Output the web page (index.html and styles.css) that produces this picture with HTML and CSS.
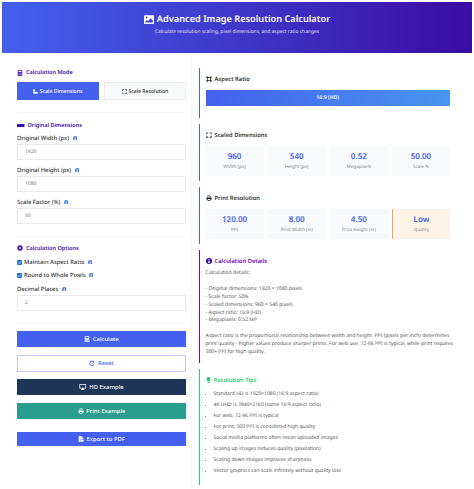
FILE: index.html
```html
<!DOCTYPE html>
<html lang="en">
<head>
<meta charset="utf-8">
<title>Advanced Image Resolution Calculator</title>
<link rel="stylesheet" href="styles.css">
</head>
<body>
<svg class="defs" width="0" height="0" aria-hidden="true">
  <symbol id="i-info" viewBox="0 0 16 16"><path fill-rule="evenodd" d="M8 0a8 8 0 1 1 0 16A8 8 0 0 1 8 0zM6.6 3.5h2.8v2.4H6.6zM6 7h3.4v4.5h1V13H5.6v-1.5h1V8.5H6z"/></symbol>
  <symbol id="i-expand" viewBox="0 0 16 16"><path d="M1 1h5v2.2H3.2V6H1zM10 1h5v5h-2.200V3.200H10zM1 10h2.200v2.800H6V15H1zM12.800 10H15v5h-5v-2.200h2.800z"/></symbol>
  <symbol id="i-print" viewBox="0 0 16 16"><path d="M4 1h6.500L12 2.500V6h-1.500V3H5.500v3H4zM2.500 6.500h11A1.500 1.500 0 0 1 15 8v4h-3v3H4v-3H1V8a1.500 1.500 0 0 1 1.500-1.500zM5.500 10.500v3h5v-3z"/></symbol>
  <symbol id="i-calc" viewBox="0 0 16 16"><path fill-rule="evenodd" d="M3.500 0h9A1.500 1.500 0 0 1 14 1.500v13a1.500 1.500 0 0 1-1.500 1.500h-9A1.500 1.500 0 0 1 2 14.500v-13A1.500 1.500 0 0 1 3.500 0zM4 2v3h8V2zM4 7v1.500h2V7zM7 7v1.500h2V7zM10 7v1.500h2V7zM4 10v1.500h2V10zM7 10v1.500h2V10zM10 10v4h2v-4zM4 12.500V14h5v-1.500z"/></symbol>
</svg>

<header class="hero">
  <h1 class="hero-title">
    <svg class="hero-icon" viewBox="0 0 16 14"><path fill-rule="evenodd" d="M1.500 0h13A1.500 1.500 0 0 1 16 1.500v11a1.500 1.500 0 0 1-1.500 1.500h-13A1.500 1.500 0 0 1 0 12.500v-11A1.500 1.500 0 0 1 1.500 0zM4 2.200a1.600 1.600 0 1 0 0 3.200 1.600 1.600 0 0 0 0-3.200zM2 11.800h12V8L10.800 4.800 6.500 9.200 5 7.700 2 10.500z"/></svg>
    Advanced Image Resolution Calculator
  </h1>
  <p class="hero-sub">Calculate resolution scaling, pixel dimensions, and aspect ratio changes</p>
</header>

<main class="layout">
  <section class="inputs">
    <h2 class="sec-title"><svg class="ic"><use href="#i-calc"/></svg>Calculation Mode</h2>
    <div class="mode-row">
      <button class="mode active"><svg class="ic-s" viewBox="0 0 16 16"><path d="M1 1h5.500v8.500H15V15H2.500A1.500 1.500 0 0 1 1 13.500z"/></svg>Scale Dimensions</button>
      <button class="mode"><svg class="ic-s"><use href="#i-expand"/></svg>Scale Resolution</button>
    </div>

    <h2 class="sec-title rule"><svg class="ic wide" viewBox="0 0 20 8"><path d="M1 0h18a1 1 0 0 1 1 1v6a1 1 0 0 1-1 1H1a1 1 0 0 1-1-1V1a1 1 0 0 1 1-1z"/></svg>Original Dimensions</h2>
    <label class="lbl">Original Width (px)<svg class="info"><use href="#i-info"/></svg></label>
    <div class="field">1920</div>
    <label class="lbl">Original Height (px)<svg class="info"><use href="#i-info"/></svg></label>
    <div class="field">1080</div>
    <label class="lbl">Scale Factor (%)<svg class="info"><use href="#i-info"/></svg></label>
    <div class="field">50</div>

    <h2 class="sec-title rule opts"><svg class="ic" viewBox="0 0 16 16"><path fill-rule="evenodd" d="M8 0l1.600 1.500 2.200-.3.900 2 2 .9-.3 2.200L16 8l-1.600 1.700.3 2.200-2 .9-.9 2-2.200-.3L8 16l-1.600-1.500-2.200.3-.9-2-2-.9.3-2.200L0 8l1.600-1.700-.3-2.200 2-.9.9-2 2.200.3zM8 5.500a2.500 2.500 0 1 0 0 5 2.500 2.500 0 0 0 0-5z"/></svg>Calculation Options</h2>
    <div class="check"><span class="box"><svg viewBox="0 0 10 10"><path d="M2 5l2.200 2.200L8 3" fill="none" stroke="#fff" stroke-width="1.600"/></svg></span>Maintain Aspect Ratio<svg class="info"><use href="#i-info"/></svg></div>
    <div class="check"><span class="box"><svg viewBox="0 0 10 10"><path d="M2 5l2.200 2.200L8 3" fill="none" stroke="#fff" stroke-width="1.600"/></svg></span>Round to Whole Pixels<svg class="info"><use href="#i-info"/></svg></div>
    <label class="lbl">Decimal Places<svg class="info"><use href="#i-info"/></svg></label>
    <div class="field">2</div>

    <div class="actions">
      <button class="btn blue"><svg class="ic-b"><use href="#i-calc"/></svg>Calculate</button>
      <button class="btn ghost"><svg class="ic-b" viewBox="0 0 16 16"><path d="M13.600 1v5.500H8.100l2-2A4.800 4.800 0 1 0 12.800 9.500h2.100A6.800 6.800 0 1 1 11.500 3z"/></svg>Reset</button>
      <button class="btn navy"><svg class="ic-b wide-b" viewBox="0 0 18 16"><path fill-rule="evenodd" d="M1.500 0h15A1.500 1.500 0 0 1 18 1.500v9a1.500 1.500 0 0 1-1.500 1.500H11l.5 2h2v2h-9v-2h2l.5-2H1.500A1.500 1.500 0 0 1 0 10.500v-9A1.500 1.500 0 0 1 1.500 0zM2 2v8h14V2z"/></svg>HD Example</button>
      <button class="btn teal"><svg class="ic-b"><use href="#i-print"/></svg>Print Example</button>
      <button class="btn blue export"><svg class="ic-b" viewBox="0 0 16 16"><path d="M3 0h6v5h5v3H7v8H3.500A1.500 1.500 0 0 1 2 14.500v-13A1.500 1.500 0 0 1 3 0zM10 0l4 4h-4zM8 9.500h7V15H8z"/></svg>Export to PDF</button>
    </div>
  </section>

  <section class="results">
    <article class="card indigo aspect">
      <h3 class="card-title"><svg class="ic dark" viewBox="0 0 16 16"><path fill-rule="evenodd" d="M1 1h4v1.500h6V1h4v4h-1.500v6H15v4h-4v-1.500H5V15H1v-4h1.500V5H1zM4.500 5v6H5v.5h6V11h.5V5H11v-.5H5V5z"/></svg>Aspect Ratio</h3>
      <div class="ratio-bar">16:9 (HD)</div>
    </article>

    <article class="card indigo stats-card">
      <h3 class="card-title"><svg class="ic dark"><use href="#i-expand"/></svg>Scaled Dimensions</h3>
      <div class="tiles">
        <div class="tile"><b>960</b><span>Width (px)</span></div>
        <div class="tile"><b>540</b><span>Height (px)</span></div>
        <div class="tile"><b>0.52</b><span>Megapixels</span></div>
        <div class="tile"><b>50.00</b><span>Scale %</span></div>
      </div>
    </article>

    <article class="card indigo stats-card">
      <h3 class="card-title"><svg class="ic dark"><use href="#i-print"/></svg>Print Resolution</h3>
      <div class="tiles">
        <div class="tile"><b>120.00</b><span>PPI</span></div>
        <div class="tile"><b>8.00</b><span>Print Width (in)</span></div>
        <div class="tile"><b>4.50</b><span>Print Height (in)</span></div>
        <div class="tile warn"><b>Low</b><span>Quality</span></div>
      </div>
    </article>

    <article class="card purple details">
      <h3 class="card-title purple-t"><svg class="ic purple-i"><use href="#i-info"/></svg>Calculation Details</h3>
      <p class="body-text">Calculation details:</p>
      <p class="body-text">- Original dimensions: 1920 × 1080 pixels<br>- Scale factor: 50%<br>- Scaled dimensions: 960 × 540 pixels<br>- Aspect ratio: 16:9 (HD)<br>- Megapixels: 0.52 MP</p>
      <p class="body-text">Aspect ratio is the proportional relationship between width and height. PPI (pixels per inch) determines print quality - higher values produce sharper prints. For web use, 72-96 PPI is typical, while print requires 300+ PPI for high quality.</p>
    </article>

    <article class="card green tips">
      <h3 class="card-title green-t"><svg class="ic green-i" viewBox="0 0 12 16"><path d="M6 0a5.500 5.500 0 0 1 3.500 9.700c-.6.6-1 1.300-1 2.300h-5c0-1-.4-1.700-1-2.300A5.500 5.500 0 0 1 6 0zM3.500 13h5v1.500L7 16H5l-1.500-1.500z"/></svg>Resolution Tips</h3>
      <ul class="tip-list">
        <li>Standard HD is 1920×1080 (16:9 aspect ratio)</li>
        <li>4K UHD is 3840×2160 (same 16:9 aspect ratio)</li>
        <li>For web, 72-96 PPI is typical</li>
        <li>For print, 300 PPI is considered high quality</li>
        <li>Social media platforms often resize uploaded images</li>
        <li>Scaling up images reduces quality (pixelation)</li>
        <li>Scaling down images improves sharpness</li>
        <li>Vector graphics can scale infinitely without quality loss</li>
      </ul>
    </article>
  </section>
</main>
</body>
</html>
```
FILE: styles.css
```css
* { box-sizing: border-box; }
html, body { margin: 0; padding: 0; }
body {
  width: 474px;
  height: 489px;
  overflow: hidden;
  background: #fff;
  color: #333;
  font-family: "Noto Sans", "Open Sans", sans-serif;
  text-rendering: geometricPrecision;
  padding: 2px 2px 0;
}
.defs { position: absolute; }
svg { fill: currentColor; flex: none; }

.hero {
  height: 51px;
  background: linear-gradient(90deg, #4361ee, #3a0ca3);
  color: #fff;
  text-align: center;
  padding-top: 10px;
}
.hero-title {
  margin: 0;
  font-size: 9.200px;
  line-height: 14px;
  font-weight: 600;
  display: flex;
  justify-content: center;
  align-items: center;
  gap: 3px;
}
.hero-icon { width: 10px; height: 9px; }
.hero-sub { margin: 2px 0 0; font-size: 4.900px; line-height: 8px; color: #e4e2f6; }

.layout {
  display: grid;
  grid-template-columns: 190px minmax(0, 1fr);
}
.inputs {
  padding: 15px 5px 0 15px;
  border-right: 1px solid #f7f7f9;
  height: 434px;
}
.sec-title {
  margin: 0;
  font-size: 5.500px;
  line-height: 9px;
  font-weight: 600;
  color: #3a0ca3;
  display: flex;
  align-items: center;
  gap: 3px;
}
.sec-title.rule { border-top: 1px solid #f7f7f9; margin-top: 12px; padding-top: 7.500px; }
.sec-title.opts { padding-top: 6.500px; }
.ic { width: 6px; height: 6px; }
.ic.wide { width: 7.500px; height: 3px; }
.ic-s { width: 5px; height: 5px; }
.ic-b { width: 6px; height: 6px; }
.ic-b.wide-b { width: 7.500px; }

.mode-row { display: grid; grid-template-columns: 1fr 1fr; gap: 5.500px; margin-top: 5px; }
.mode {
  height: 18px;
  padding: 0;
  border: 1px solid #eeeef2;
  background: #f8f9fa;
  color: #333;
  font: 500 5.100px/8px "Noto Sans", sans-serif;
  display: flex;
  align-items: center;
  justify-content: center;
  gap: 1.500px;
}
.mode.active { background: #4361ee; border-color: #4361ee; color: #fff; }

.lbl {
  display: flex;
  align-items: center;
  gap: 3px;
  font-size: 5.800px;
  line-height: 8px;
  font-weight: 500;
  color: #333;
  margin-top: 6px;
  height: 8px;
}
.sec-title + .lbl { margin-top: 4.500px; }
.info { width: 4.500px; height: 4.500px; color: #4a7fd8; }
.lbl .info, .check .info { margin-left: 1px; }
.field {
  height: 16px;
  margin-top: 2px;
  border: 1px solid #e9e9ee;
  background: #fff;
  color: #777;
  font-size: 5px;
  line-height: 14px;
  padding-left: 7px;
}
.check {
  display: flex;
  align-items: center;
  gap: 2px;
  height: 8px;
  font-size: 5.800px;
  line-height: 8px;
  font-weight: 500;
  margin-top: 5px;
}
.sec-title + .check { margin-top: 5.500px; }
.box {
  width: 5px;
  height: 5px;
  border-radius: 1px;
  background: #1f6fd0;
  display: flex;
}
.box svg { width: 5px; height: 5px; }

.actions {
  display: flex;
  flex-direction: column;
  border-top: 1px solid #f7f7f9;
  margin-top: 12px;
  padding-top: 7px;
  gap: 7.500px;
}
.btn {
  height: 16px;
  padding: 0;
  border: 0;
  font: 500 5.900px/8px "Noto Sans", sans-serif;
  color: #fff;
  display: flex;
  align-items: center;
  justify-content: center;
  gap: 2.500px;
}
.btn.blue { background: #4361ee; }
.btn.ghost { background: #fff; color: #4361ee; border: 1px solid #c3cbf4; height: 17px; }
.btn.navy { background: #1d3557; }
.btn.teal { background: #2a9d8f; }
.btn.export { height: 14.500px; margin-top: 5.500px; }

.results {
  padding: 15px 22px 0 6.500px;
  display: flex;
  flex-direction: column;
  gap: 6px;
}
.card {
  border-left: 1.500px solid #4361ee;
  padding: 6px 0 0 6px;
  min-width: 0;
}
.card.purple { border-left-color: #7209b7; }
.card.green { border-left-color: #2ecc71; }
.aspect { height: 50px; }
.stats-card { height: 57px; }
.details { height: 113px; }
.tips { height: 116px; }
.card-title {
  margin: 0;
  font-size: 5.800px;
  line-height: 10px;
  font-weight: 600;
  color: #333;
  display: flex;
  align-items: center;
  gap: 3px;
}
.ic.dark { color: #222; }
.purple-t { color: #7209b7; }
.purple-i { color: #3a0ca3; }
.green-t { color: #2ecc71; }
.green-i { color: #2ecc71; width: 5px; }

.ratio-bar {
  height: 15.500px;
  margin-top: 6px;
  background: linear-gradient(90deg, #4361ee, #4895ef);
  color: #fff;
  text-align: center;
  font-size: 5.200px;
  font-weight: 600;
  line-height: 15.500px;
}
.tiles {
  display: grid;
  grid-template-columns: repeat(4, minmax(0, 1fr));
  gap: 4px;
  margin-top: 6px;
}
.tile {
  height: 30px;
  background: #f8f9fa;
  text-align: center;
  padding-top: 5px;
  display: flex;
  flex-direction: column;
  align-items: center;
}
.tile b { font-size: 8px; line-height: 12px; font-weight: 600; color: #4361ee; }
.tile span { font-size: 4.600px; line-height: 7px; color: #888; margin-top: 1px; }
.tile.warn { background: #fdf3e7; border-left: 1px solid #f7a63f; }

.body-text {
  margin: 4px 0 7.900px;
  font-size: 5.050px;
  line-height: 7.900px;
  color: #555;
  width: 250px;
}
.body-text + .body-text { margin-top: 0; }
.tip-list {
  margin: 3.500px 0 0;
  padding: 0 0 0 8px;
  font-size: 5px;
  line-height: 11px;
  color: #555;
}
```
